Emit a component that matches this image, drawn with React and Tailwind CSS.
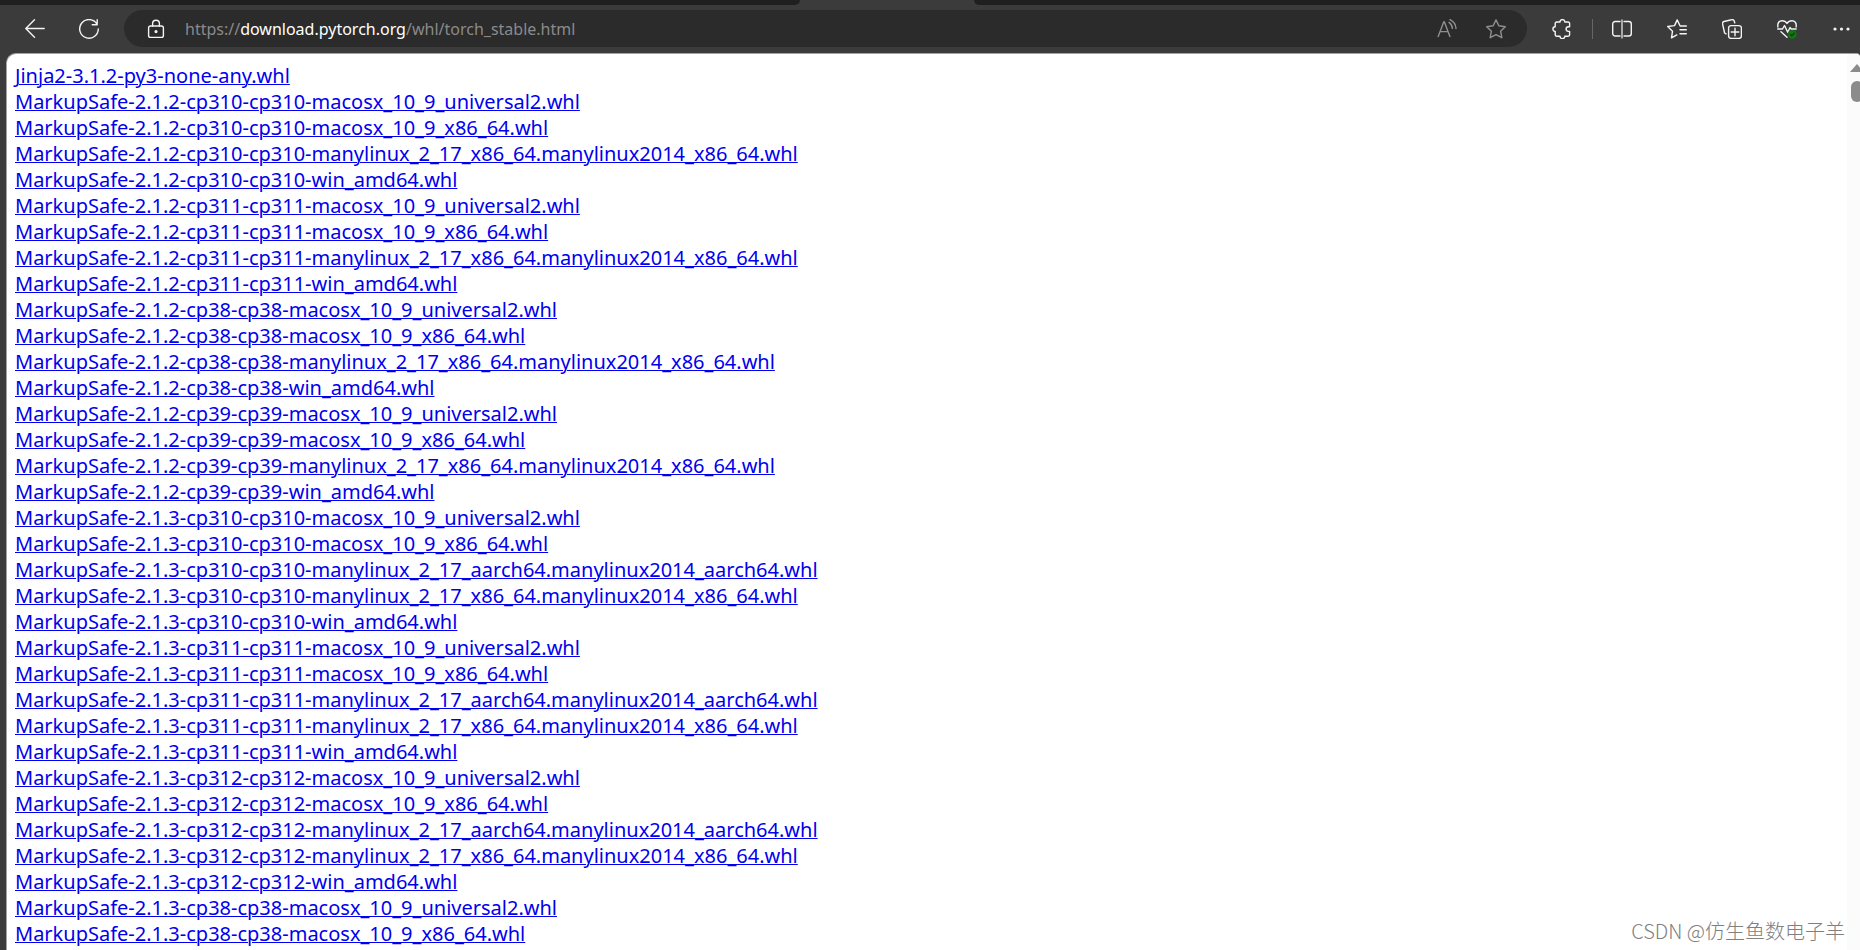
import { useState } from 'react';

const GROUPS = [
  { version: '2.1.2', pythons: ['cp310', 'cp311', 'cp38', 'cp39'], aarch64: false },
  { version: '2.1.3', pythons: ['cp310', 'cp311', 'cp312', 'cp38'], aarch64: true },
];

const X86 = 'manylinux_2_17_x86_64.manylinux2014_x86_64';
const AARCH = 'manylinux_2_17_aarch64.manylinux2014_aarch64';

const wheels = [
  'Jinja2-3.1.2-py3-none-any.whl',
  ...GROUPS.flatMap(({ version, pythons, aarch64 }) => {
    const platforms = ['macosx_10_9_universal2', 'macosx_10_9_x86_64', ...(aarch64 ? [AARCH] : []), X86, 'win_amd64'];
    return pythons.flatMap((py) => platforms.map((p) => `MarkupSafe-${version}-${py}-${py}-${p}.whl`));
  }),
].slice(0, 34);

function Icon({ children, className = 'size-5' }) {
  return (
    <svg viewBox="0 0 20 20" className={className} fill="none" stroke="currentColor" strokeWidth="1.4" strokeLinecap="round" strokeLinejoin="round" aria-hidden="true">
      {children}
    </svg>
  );
}

function ToolButton({ label, children, className = 'text-gray-100' }) {
  return (
    <button type="button" aria-label={label} className={`flex h-9 w-9 shrink-0 items-center justify-center rounded hover:bg-white/10 ${className}`}>
      {children}
    </button>
  );
}

function TabStrip() {
  return (
    <div className="flex h-[5px] bg-[#3b3b3b]">
      <div className="w-[43%] rounded-br-lg bg-[#1f1f1f]" />
      <div className="w-[174px]" />
      <div className="flex-1 rounded-bl-lg bg-[#1f1f1f]" />
    </div>
  );
}

function AddressBar() {
  const [url, setUrl] = useState('https://download.pytorch.org/whl/torch_stable.html');

  return (
    <div className="ml-[17px] flex h-[37px] flex-1 items-center rounded-full bg-[#2b2b2b] pr-[13px] pl-[22px]">
      <button type="button" aria-label="View site information" className="text-gray-100">
        <Icon>
          <rect x="2.6" y="7" width="14.8" height="11.4" rx="2" />
          <path d="M6.6 7V4.6a3.4 3.4 0 0 1 6.8 0V7" />
          <circle cx="10" cy="12.6" r="0.9" fill="currentColor" />
        </Icon>
      </button>
      <div className="relative ml-[19px] flex-1 text-[16px] leading-6 text-[#8a8a8a]">
        <span aria-hidden="true">
          https://<span className="text-white">download.pytorch.org</span>/whl/torch_stable.html
        </span>
        <input
          type="text"
          aria-label="Address and search bar"
          value={url}
          onChange={(e) => setUrl(e.target.value)}
          className="absolute inset-0 w-full bg-[#2b2b2b] text-white opacity-0 outline-none focus:opacity-100"
        />
      </div>
      <div className="flex gap-[13px]">
        <ToolButton label="Read aloud" className="text-[#8f8f8f]">
          <Icon>
            <path d="M1.2 17.6 6.8 2.8h.5l5.6 14.8M3.2 12.6h7.7" />
            <path d="M12 3.4c2 1.3 3.2 3.4 3.4 6M13 .6c3.6 1.7 5.7 4.8 6 8.9" />
          </Icon>
        </ToolButton>
        <ToolButton label="Add this page to favorites" className="text-[#8f8f8f]">
          <Icon>
            <path d="m10 .9 2.8 5.9 6.5.9-4.7 4.5 1.2 6.5-5.8-3.1-5.8 3.1 1.2-6.5L.7 7.7l6.5-.9z" />
          </Icon>
        </ToolButton>
      </div>
    </div>
  );
}

function Toolbar() {
  return (
    <header className="flex h-12 items-center pb-[1px] pl-[17px]">
      <div className="flex gap-[18px]">
        <ToolButton label="Back">
          <Icon>
            <path d="M19.2 9.5H.8M9.5.8.8 9.5l8.7 8.7" />
          </Icon>
        </ToolButton>
        <ToolButton label="Refresh">
          <Icon>
            <path d="M17.6 4.5A9.3 9.3 0 1 0 19.3 10M18.2.7v5h-5" />
          </Icon>
        </ToolButton>
      </div>
      <AddressBar />
      <div className="ml-[17px] flex items-center">
        <ToolButton label="Extensions">
          <Icon>
            <path d="M8 3a2.4 2.4 0 0 1 4.8 0h3.4a1.4 1.4 0 0 1 1.4 1.4v3.4h-1.2a2.3 2.3 0 0 0 0 4.6h1.2v3.4a1.4 1.4 0 0 1-1.4 1.4h-3.4a2.4 2.4 0 0 1-4.8 0H4.6a1.4 1.4 0 0 1-1.4-1.4v-3.4a2.3 2.3 0 0 1 0-4.6V4.4A1.4 1.4 0 0 1 4.6 3z" />
          </Icon>
        </ToolButton>
        <div className="mr-[11px] ml-3 h-5 w-px bg-[#666]" />
      </div>
      <div className="flex gap-[19px]">
        <ToolButton label="Split screen">
          <Icon>
            <path d="M8 2.5H3.2A2.5 2.5 0 0 0 .7 5v9.5A2.5 2.5 0 0 0 3.2 17H8M12 2.5h4.8A2.5 2.5 0 0 1 19.3 5v9.5a2.5 2.5 0 0 1-2.5 2.5H12" />
            <path d="M10 .5v19" stroke="#aaa" strokeWidth="2" strokeLinecap="butt" />
          </Icon>
        </ToolButton>
        <ToolButton label="Favorites">
          <Icon>
            <path d="M19.3 7h-6.2L10.2.9 7.5 6.6l-6.8.9 4.8 4.8-1 6.5 5.3-2.9M13 10.800h6.300M13 14.700h6.300" />
          </Icon>
        </ToolButton>
        <ToolButton label="Collections">
          <Icon>
            <rect x="6.6" y="6.6" width="12.8" height="12.8" rx="2.5" />
            <path d="M13 9.2v7.6M9.2 13h7.6M4 14.8 2.6 14 .6 5.2A2.2 2.2 0 0 1 2 2.5L9.5.7a2.2 2.2 0 0 1 2.8 1.6l.4 1.5" />
          </Icon>
        </ToolButton>
        <ToolButton label="Browser essentials">
          <Icon>
            <path d="M.9 8C.2 3.6 2.4 1.7 5 1.7c2.3 0 4 1 5 2.7 1-1.7 2.7-2.7 5-2.7 2.6 0 4.8 1.9 4.1 6.3" />
            <path d="M.7 10h4.800l2-3.500 3.200 6.800 2.300-4.800 1.200 1.500h5M4 12.800l6 5.500" />
            <circle cx="15.3" cy="15.4" r="4.3" fill="#0e7a0d" stroke="none" />
            <path d="m13.5 15.5 1.3 1.3 2.5-2.6" stroke="#173a17" />
          </Icon>
        </ToolButton>
        <ToolButton label="Settings and more">
          <Icon>
            <g fill="currentColor" stroke="none">
              <circle cx="3" cy="10" r="1.6" />
              <circle cx="9.5" cy="10" r="1.6" />
              <circle cx="16" cy="10" r="1.6" />
            </g>
          </Icon>
        </ToolButton>
      </div>
    </header>
  );
}

function Scrollbar() {
  return (
    <div className="flex w-[13px] shrink-0 flex-col overflow-hidden bg-[#fbfbfb] pt-[10px] pl-[3px]" aria-hidden="true">
      <svg viewBox="0 0 14 8" className="h-2 w-[14px] shrink-0" fill="#8b8b8b">
        <path d="M7 0l7 8H0z" />
      </svg>
      <div className="mt-[9px] ml-px h-[21px] w-3 shrink-0 rounded-full bg-[#8b8b8b]" />
    </div>
  );
}

export default function App() {
  return (
    <div className="relative flex h-screen flex-col overflow-hidden bg-[#3b3b3b] font-['Noto_Sans','Noto_Sans_CJK_SC',sans-serif]">
      <TabStrip />
      <Toolbar />
      <div className="ml-[6px] flex min-h-0 flex-1 overflow-hidden rounded-tl-[10px] rounded-tr border-t border-l border-[#a3a3a3] bg-white">
        <main className="min-w-0 flex-1 overflow-hidden px-2 pt-[9px]">
          {wheels.map((name) => (
            <div key={name} className="text-[20px] leading-[26px] whitespace-nowrap">
              <a href={`#${name}`} className="text-[#0000ee] underline decoration-1 underline-offset-1">
                {name}
              </a>
            </div>
          ))}
        </main>
        <Scrollbar />
      </div>
      <p className="pointer-events-none absolute right-[15px] bottom-[5px] font-['Noto_Sans_CJK_SC',sans-serif] text-[20px] leading-7 font-light text-[#808080]">
        CSDN @仿生鱼数电子羊
      </p>
    </div>
  );
}
